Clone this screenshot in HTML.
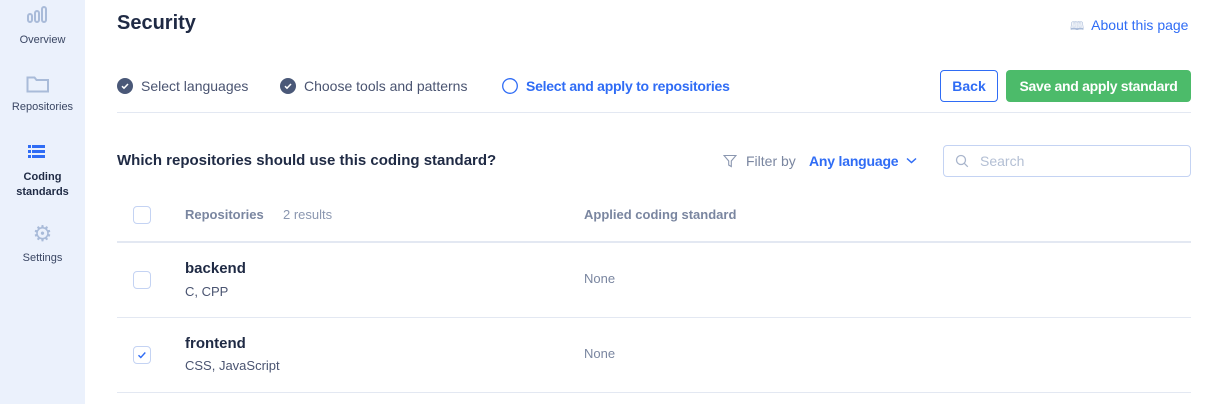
<!DOCTYPE html>
<html><head><meta charset="utf-8"><style>
*{box-sizing:border-box;margin:0;padding:0}
body{width:1207px;height:404px;overflow:hidden;background:#fff;font-family:"Liberation Sans",sans-serif;position:relative;color:#1f2a44}
.sb{position:absolute;left:0;top:0;width:85px;height:404px;background:#ebf1fc}
.ni{position:absolute;left:0;width:85px;text-align:center;font-size:11px;color:#3a4663}
.a{position:absolute;white-space:nowrap}
.cb{position:absolute;width:18px;height:18px;border:1.5px solid #c4d3f3;border-radius:4px;background:#fff}
.hr{position:absolute;left:117px;width:1074px;height:1px;background:#e3e8f2}
</style></head><body>
<div class="sb">
 <svg style="position:absolute;left:27px;top:6px" width="20" height="18"><g fill="none" stroke="#a9bbd9" stroke-width="2"><rect x="1" y="8" width="4" height="8" rx="2"/><rect x="8" y="5" width="4" height="11" rx="2"/><rect x="15" y="1" width="4" height="15" rx="2"/></g></svg>
 <div class="ni" style="top:34px">Overview</div>
 <svg style="position:absolute;left:26px;top:75px" width="24" height="18"><path d="M1.5 2.5h7l2 2.5h11.5v11.5h-20.5z" fill="none" stroke="#a9bbd9" stroke-width="2"/></svg>
 <div class="ni" style="top:101px">Repositories</div>
 <svg style="position:absolute;left:28px;top:145px" width="17" height="14" fill="#2f6cf5"><rect x="0" y="0" width="3" height="3"/><rect x="4" y="0" width="13" height="3"/><rect x="0" y="5" width="3" height="3"/><rect x="4" y="5" width="13" height="3"/><rect x="0" y="10" width="3" height="3"/><rect x="4" y="10" width="13" height="3"/></svg>
 <div class="ni" style="top:170px;font-weight:bold;color:#1f2a44;line-height:15px">Coding<br>standards</div>
 <div class="ni" style="top:221px;font-size:22px;color:#a9bbd9;line-height:26px">⚙</div>
 <div class="ni" style="top:252px">Settings</div>
</div>
<div class="a" style="left:117px;top:12px;font-size:20px;font-weight:bold">Security</div>
<div class="a" style="left:1070px;top:17px;font-size:14px;color:#2f6cf5"><span style="color:#a9bbd9;font-size:12px">🕮</span>&nbsp; About this page</div>

<svg class="a" style="left:117px;top:78px" width="16" height="16"><circle cx="8" cy="8" r="8" fill="#4a5878"/><path d="M5 8.2l2 2 4-4.2" stroke="#fff" stroke-width="1.5" fill="none"/></svg>
<div class="a" style="left:141px;top:78px;font-size:14px;color:#4a5471">Select languages</div>
<svg class="a" style="left:280px;top:78px" width="16" height="16"><circle cx="8" cy="8" r="8" fill="#4a5878"/><path d="M5 8.2l2 2 4-4.2" stroke="#fff" stroke-width="1.5" fill="none"/></svg>
<div class="a" style="left:304px;top:78px;font-size:14px;color:#4a5471">Choose tools and patterns</div>
<svg class="a" style="left:502px;top:78px" width="16" height="16"><circle cx="8" cy="8" r="7.3" fill="none" stroke="#2f6cf5" stroke-width="1.3"/></svg>
<div class="a" style="left:526px;top:78px;font-size:14px;font-weight:bold;color:#2f6cf5;letter-spacing:-0.25px">Select and apply to repositories</div>
<div class="a" style="left:940px;top:70px;width:58px;height:32px;border:1.3px solid #2f6cf5;border-radius:4px;color:#2f6cf5;font-weight:bold;font-size:14px;text-align:center;line-height:30px">Back</div>
<div class="a" style="left:1006px;top:70px;width:185px;height:32px;background:#4cbb6a;border-radius:4px;color:#fff;font-weight:bold;font-size:14px;text-align:center;line-height:32px;letter-spacing:-0.3px">Save and apply standard</div>
<div class="hr" style="top:112px"></div>

<div class="a" style="left:117px;top:152px;font-size:15px;font-weight:bold">Which repositories should use this coding standard?</div>
<svg class="a" style="left:723px;top:154px" width="14" height="14"><path d="M1 1.5h12l-4.7 5.5v5.5l-2.6-1.5v-4z" fill="none" stroke="#8b97b0" stroke-width="1.1"/></svg>
<div class="a" style="left:746px;top:153px;font-size:14px;color:#7a86a0">Filter by</div>
<div class="a" style="left:809px;top:153px;font-size:14px;font-weight:bold;color:#2f6cf5;letter-spacing:-0.2px">Any language</div>
<svg class="a" style="left:906px;top:157px" width="11" height="8"><path d="M1 1.5l4.5 4 4.5-4" fill="none" stroke="#2f6cf5" stroke-width="1.5"/></svg>
<div class="a" style="left:943px;top:145px;width:248px;height:32px;border:1.3px solid #c4d3f3;border-radius:4px"></div>
<svg class="a" style="left:955px;top:154px" width="14" height="14"><circle cx="6" cy="6" r="4.5" fill="none" stroke="#a9b5cc" stroke-width="1.3"/><path d="M9.3 9.3l3.5 3.5" stroke="#a9b5cc" stroke-width="1.3"/></svg>
<div class="a" style="left:980px;top:153px;font-size:14px;color:#b3bfd4">Search</div>

<div class="cb" style="left:133px;top:206px"></div>
<div class="a" style="left:185px;top:207px;font-size:13px;font-weight:bold;color:#7a86a0">Repositories</div>
<div class="a" style="left:283px;top:207px;font-size:13px;color:#8b97b0">2 results</div>
<div class="a" style="left:584px;top:207px;font-size:13px;font-weight:bold;color:#7a86a0">Applied coding standard</div>
<div class="hr" style="top:241px;height:2px"></div>

<div class="cb" style="left:133px;top:271px"></div>
<div class="a" style="left:185px;top:260px;font-size:15px;font-weight:bold">backend</div>
<div class="a" style="left:185px;top:284px;font-size:13px;color:#4a5471">C, CPP</div>
<div class="a" style="left:584px;top:271px;font-size:13px;color:#7a86a0">None</div>
<div class="hr" style="top:317px"></div>

<div class="cb" style="left:133px;top:346px"><svg style="position:absolute;left:3px;top:3px" width="10" height="10"><path d="M1.5 5.2l2.3 2.3 4.5-5" fill="none" stroke="#2f6cf5" stroke-width="1.4"/></svg></div>
<div class="a" style="left:185px;top:335px;font-size:15px;font-weight:bold">frontend</div>
<div class="a" style="left:185px;top:358px;font-size:13px;color:#4a5471">CSS, JavaScript</div>
<div class="a" style="left:584px;top:346px;font-size:13px;color:#7a86a0">None</div>
<div class="hr" style="top:392px"></div>
</body></html>
